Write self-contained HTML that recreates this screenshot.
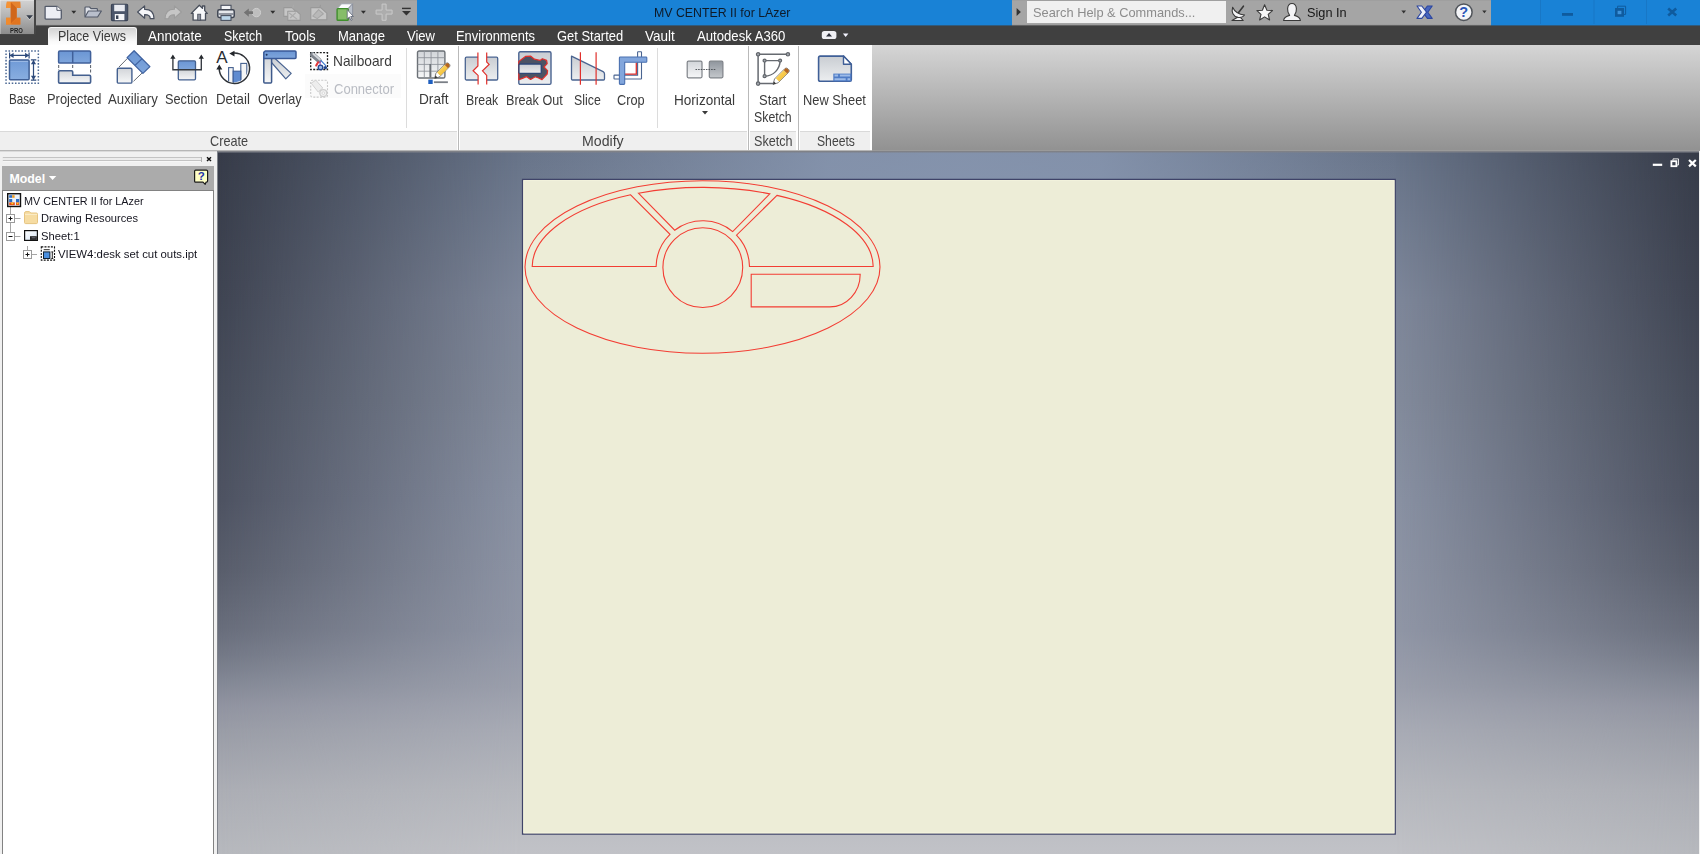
<!DOCTYPE html>
<html lang="en">
<head>
<meta charset="utf-8">
<title>MV CENTER II for LAzer</title>
<style>
*{box-sizing:border-box;margin:0;padding:0}
html,body{width:1700px;height:854px;overflow:hidden;background:#f0f0f0}
body{font-family:"Liberation Sans",sans-serif;font-size:13px;color:#3c3c3c;position:relative}
.t{position:absolute;white-space:nowrap;display:block;transform-origin:0 0}
.a{position:absolute;display:block}
svg{position:absolute;display:block;overflow:visible}
#titlebar{position:absolute;left:0;top:0;width:1700px;height:26px;background:#1982d6}
#qat{position:absolute;left:0;top:0;width:417px;height:26px;background:linear-gradient(#9c9c9c 0,#a5a5a5 1.5px,#a5a5a5 24px,#9a9a9a 25px)}
#infocenter{position:absolute;left:1012px;top:0;width:479px;height:26px;background:linear-gradient(#9c9c9c 0,#a5a5a5 1.5px,#a5a5a5 24px,#9a9a9a 25px)}
#tbedge{position:absolute;left:0;top:25px;width:1700px;height:1px;background:rgba(64,64,64,.6)}
#search{position:absolute;left:1027px;top:1px;width:199px;height:22px;background:#f0f0f0}
#tabbar{position:absolute;left:0;top:26px;width:1700px;height:19px;background:#404040}
#tabactive{position:absolute;left:48px;top:27px;width:89px;height:19px;background:linear-gradient(#d2d2d2,#e6e6e6 40%,#fafafa 75%,#fff);border:1px solid #f4f4f4;border-bottom:none;border-radius:3px 3px 0 0}
#appbtn{position:absolute;left:0;top:0;width:36px;height:35px;background:#454545;border-bottom-right-radius:2px}
#appbtn i{position:absolute;left:0;top:0;width:34px;height:34px;display:block;background:linear-gradient(#e6e6e6 0,#d0d0d0 1.5px,#b2b2b2 50%,#8b8b8b);box-shadow:inset 1px 0 0 rgba(255,255,255,.28)}
#ribbon{position:absolute;left:0;top:45px;width:1700px;height:106px;background:linear-gradient(#d5d5d5,#919191)}
#panels{position:absolute;left:0;top:45px;width:872px;height:106px;background:#fff}
.ptl{position:absolute;top:131px;height:19px;background:#efefef;border-top:1px solid #d9d9d9}
.vsep{position:absolute;width:1px;background:#dcdcdc}
.psep{position:absolute;width:1px;top:46px;height:104px;background:#b9b9b9}
#ribshadow{position:absolute;left:0;top:150px;width:872px;height:1px;background:#b6b6b6}
#ribshadow2{position:absolute;left:218px;top:151px;width:1481px;height:2px;background:linear-gradient(#7f8187 50%,rgba(126,129,138,.5) 50%)}
#ribshadow4{position:absolute;left:872px;top:150px;width:828px;height:1px;background:#9a9a9a}
#ribshadow3{position:absolute;left:0;top:151px;width:217px;height:1px;background:#dadada}
#browser{position:absolute;left:0;top:151px;width:218px;height:703px;background:#f0f0f0;border-right:1px solid #7f838b}
#bhead{position:absolute;left:2px;top:166px;width:212px;height:25px;background:#ababab}
#btree{position:absolute;left:2px;top:190px;width:212px;height:670px;background:#fff;border:1px solid #828282}
#canvas{position:absolute;left:218px;top:152px;width:1481px;height:702px;overflow:hidden;background:#8793ab}
#sheet{position:absolute;left:522px;top:179px;width:874px;height:656px;background:#ececd6;border:1px solid #2b305c}
#canvas{background:linear-gradient(to bottom,#687489 0.00%,#6a768b 1.85%,#7e879a 21.08%,#838b9c 35.33%,#8991a3 49.57%,#9096a6 68.09%,#9b9fac 76.21%,#a8abb5 82.34%,#b6b8be 90.88%,#c1c2c7 100.00%)}
#cvL,#cvR{position:absolute;top:0;width:304px;height:702px;background:linear-gradient(to bottom,#363b48 0.00%,#3f4452 21.08%,#464c5a 35.33%,#4d5261 49.57%,#585d6b 59.54%,#686d7b 68.09%,#737886 71.65%,#818693 75.21%,#9093a0 78.77%,#999ca6 82.34%,#abadb4 90.88%,#b6b8bd 100.00%)}
#cvL{left:0;-webkit-mask-image:linear-gradient(to right,#000,transparent);mask-image:linear-gradient(to right,#000,transparent)}
#cvR{right:0;-webkit-mask-image:linear-gradient(to left,#000,transparent);mask-image:linear-gradient(to left,#000,transparent)}
#cvT{position:absolute;left:304px;top:0;width:874px;height:28px;background:linear-gradient(to right,rgba(138,153,179,0),rgba(138,153,179,.78) 35%,rgba(138,153,179,.82) 50%,rgba(138,153,179,.78) 66%,rgba(138,153,179,0))}

</style>
</head>
<body>
<div id="titlebar"></div><div id="qat"></div><div id="infocenter"></div><div id="search"></div>
<span class="t" style="left:653.70px;top:4.0px;font-size:13px;color:#0e1a28;line-height:17px;transform:scaleX(0.949);">MV CENTER II for LAzer</span>
<span class="t" style="left:1033.00px;top:4.0px;font-size:13.4px;color:#8c8c8c;line-height:17px;transform:scaleX(0.957);">Search Help &amp; Commands...</span>
<span class="t" style="left:1307.20px;top:4.0px;font-size:13.4px;color:#161616;line-height:17px;transform:scaleX(0.950);">Sign In</span>
<div id="tbedge"></div><div id="tabbar"></div><div id="tabactive"></div>
<span class="t" style="left:57.90px;top:27.0px;font-size:14.2px;color:#3a3a3a;line-height:18px;transform:scaleX(0.882);">Place Views</span>
<span class="t" style="left:148.20px;top:27.0px;font-size:14.2px;color:#ffffff;line-height:18px;transform:scaleX(0.945);">Annotate</span>
<span class="t" style="left:224.20px;top:27.0px;font-size:14.2px;color:#ffffff;line-height:18px;transform:scaleX(0.879);">Sketch</span>
<span class="t" style="left:284.70px;top:27.0px;font-size:14.2px;color:#ffffff;line-height:18px;transform:scaleX(0.925);">Tools</span>
<span class="t" style="left:337.60px;top:27.0px;font-size:14.2px;color:#ffffff;line-height:18px;transform:scaleX(0.919);">Manage</span>
<span class="t" style="left:406.60px;top:27.0px;font-size:14.2px;color:#ffffff;line-height:18px;transform:scaleX(0.919);">View</span>
<span class="t" style="left:456.00px;top:27.0px;font-size:14.2px;color:#ffffff;line-height:18px;transform:scaleX(0.911);">Environments</span>
<span class="t" style="left:557.00px;top:27.0px;font-size:14.2px;color:#ffffff;line-height:18px;transform:scaleX(0.912);">Get Started</span>
<span class="t" style="left:645.20px;top:27.0px;font-size:14.2px;color:#ffffff;line-height:18px;transform:scaleX(0.950);">Vault</span>
<span class="t" style="left:697.00px;top:27.0px;font-size:14.2px;color:#ffffff;line-height:18px;transform:scaleX(0.926);">Autodesk A360</span>
<div id="appbtn"><i></i></div>
<svg style="left:0;top:0" width="1700" height="46" viewBox="0 0 1700 46"><g>
<path d="M6.9 1.8H20.2L20.5 8H16.7V17.8H20.3V24.5H6V17.8H10.7V8H6Z" fill="#ec7c22"/>
<path d="M10.7 2.2L16.7 8V17.8L10.7 23.5Z" fill="#c9601a" opacity=".8"/>
<path d="M6.9 1.8H10.7V8H6Z" fill="#f59335"/>
<path d="M16.7 8L11 1.8H20.2L20.5 8Z" fill="#e48435" opacity=".8"/>
<path d="M6 17.8H10.7V24.5H6Z" fill="#f28a2a"/>
<path d="M16.7 17.8H20.3V24.5H11Z" fill="#e07420" opacity=".9"/>
<path d="M26.3 16.2H32.9L29.6 20.2Z" fill="#e6e6e6" opacity=".7"/>
<path d="M26.3 15.2H32.9L29.6 19.2Z" fill="#353d4a"/>
</g>
<g transform="translate(44.5,5.5)"><path d="M1.4 0.8H12.4L16.8 4.8V12.6Q16.8 13.6 15.8 13.6H1.4Q0.6 13.6 0.6 12.6V1.6Q0.6 0.8 1.4 0.8Z" fill="#eceef4" stroke="#545b6a" stroke-width="1.3" stroke-linejoin="round"/><path d="M12.4 0.8V4.8H16.8" fill="#fff" stroke="#545b6a" stroke-width="1"/></g>
<path d="M71.3 10.7h5.0l-2.5 3.0z" fill="#2f2f2f"/>
<g transform="translate(84,6)"><path d="M1 10.6V1.8Q1 1 1.8 1H5.6L7 2.6H12.6Q13.4 2.6 13.4 3.4V5" fill="#dfe2e9" stroke="#545b6a" stroke-width="1.2" stroke-linejoin="round"/><path d="M1 11L4.4 5H17.4L13.6 11Z" fill="#b9bfcc" stroke="#545b6a" stroke-width="1.2" stroke-linejoin="round"/></g>
<g transform="translate(110.8,3.6)"><path d="M1.6 0.7H15.8Q16.9 0.7 16.9 1.8V15.9Q16.9 17 15.8 17H1.6Q0.6 17 0.6 15.9V1.8Q0.6 0.7 1.6 0.7Z" fill="#4b566b" stroke="#3a4356" stroke-width="1.1"/><rect x="3.4" y="1.2" width="10.6" height="6.4" fill="#e9ebf1"/><rect x="4" y="10.4" width="9.6" height="6.2" fill="#f4f5f8"/><rect x="5.2" y="11.8" width="2.4" height="3.6" fill="#3a4356"/></g>
<path d="M137.6 12L144.6 5.9V9.3Q153.7 9 154 18.7H150.3Q150.2 14.6 144.6 14.7V18.2Z" fill="#f6f7fa" stroke="#4a5160" stroke-width="1.2" stroke-linejoin="round"/>
<path d="M181.4 12L174.4 5.9V9.3Q165.3 9 165 18.7H168.7Q168.8 14.6 174.4 14.7V18.2Z" fill="#c6c6c6" stroke="#9c9c9c" stroke-width="1.1" stroke-linejoin="round"/>
<g transform="translate(190.5,4.2)"><path d="M0.8 9.2L8.8 1L12 4.2V1.8H14.2V6.4L16.8 9.2H15V16H2.6V9.2Z" fill="#f7f8fa" stroke="#484e5a" stroke-width="1.3" stroke-linejoin="round"/><rect x="7.2" y="10" width="3" height="6" fill="#8a909c" stroke="#484e5a" stroke-width="0.8"/></g>
<g transform="translate(217,4.6)"><rect x="4" y="0.7" width="10" height="5" fill="#f4f5f8" stroke="#4a5160" stroke-width="1.1"/><rect x="0.8" y="5.2" width="16.4" height="7.6" rx="1.4" fill="#e6e8ec" stroke="#3f4552" stroke-width="1.5"/><path d="M1.6 9.4H16.4" stroke="#6d7380" stroke-width="1.4"/><rect x="4" y="11" width="10" height="4.8" fill="#bcd6ea" stroke="#4a5160" stroke-width="1.1"/></g>
<g transform="translate(243.4,7.6)"><circle cx="13" cy="5" r="4.2" fill="#bebebe" stroke="#cfcfcf" stroke-width="1"/><path d="M0.4 5L5.4 0.8V3.6H9.6V6.4H5.4V9.2Z" fill="#737373"/></g>
<path d="M270.3 10.7h5.0l-2.5 3.0z" fill="#2f2f2f"/>
<g transform="translate(283.2,4)" fill="#c6c6c6" stroke="#999" stroke-width="1.1" stroke-linejoin="round"><path d="M0.6 3.6H8.6L11.6 6.4V12.4H0.6Z"/><path d="M4.6 7.2H13.4L17 10.4V16.4H4.6Z"/><path d="M10.6 0.6L9.4 4.6M6 9L14 15.4M7 14L12.6 8.6" fill="none" stroke="#aaa"/></g>
<g transform="translate(310.2,4)" fill="#c6c6c6" stroke="#999" stroke-width="1.1" stroke-linejoin="round"><path d="M0.6 3.6H10.4L16.6 9.2V15.8H0.6Z"/><path d="M2.6 12L8.4 5.6L13.2 9.8L7 14.6Z" fill="#b8b8b8" stroke="#a6a6a6"/><path d="M10.4 0.8L9.6 3.6" fill="none"/></g>
<g transform="translate(336.2,3)"><path d="M1 5.6L5.4 0.8H16.4L12 5.6Z" fill="#fafbfc" stroke="#9aa0aa" stroke-width="0.9" stroke-linejoin="round"/><path d="M12 5.6L16.4 0.8V12.6L12 17.2Z" fill="#b9bfc9" stroke="#8a909c" stroke-width="0.9" stroke-linejoin="round"/><rect x="0.9" y="5.6" width="11.1" height="11.6" rx="0.8" fill="#86bd69" stroke="#3f8f2c" stroke-width="1.4"/><path d="M11 6.6V16L13.2 14L14.8 17.4L16 16.8L14.5 13.5H17.2Z" fill="#fff" stroke="#5a6170" stroke-width="0.8" stroke-linejoin="round"/></g>
<path d="M360.9 10.7h5.0l-2.5 3.0z" fill="#2f2f2f"/>
<g transform="translate(375.5,3.5)"><path d="M6.6 0.6H10.6V6.6H16.6V10.6H10.6V16.8H6.6V10.6H0.6V6.6H6.6Z" fill="#adadad" stroke="#cacaca" stroke-width="1" stroke-linejoin="round"/></g>
<path d="M402 8.4H410.8" stroke="#333" stroke-width="1.4"/><path d="M402 11H410.8L406.4 15.4Z" fill="#333"/>
<path d="M1016.6 8L1020.9 12L1016.6 16Z" fill="#333"/>
<g fill="#f5f5f7" stroke="#383838" stroke-width="1.1" stroke-linejoin="round"><path d="M1238 17L1232 20.5H1243.2L1240.4 17.4Z"/><path d="M1232.6 7.3C1231.3 12 1233 16.4 1238 17.4C1241 17.9 1243.4 16.7 1244.5 15C1239.6 14.6 1234.6 11.6 1232.6 7.3Z"/><path d="M1238.6 12.4L1243.4 6.2" stroke-width="1.6" stroke-linecap="round"/></g>
<g transform="translate(1256.5,4)"><path d="M8.1 0.8L10.4 6.2L16 6.6L11.7 10.3L13.1 16L8.1 12.9L3.1 16L4.5 10.3L0.4 6.6L5.9 6.2Z" fill="#f8f8f8" stroke="#3c3c3c" stroke-width="1.1" stroke-linejoin="round"/></g>
<path d="M1283.6 20.5Q1284 16.8 1289.6 15.4Q1287.4 12.6 1287.6 8.6Q1288 3.5 1292 3.5Q1296 3.5 1296.4 8.6Q1296.6 12.6 1294.4 15.4Q1300 16.8 1300.4 20.5Z" fill="#f4f4f6" stroke="#383838" stroke-width="1.1" stroke-linejoin="round"/>
<path d="M1401.4 10.6h4.6l-2.3 2.8z" fill="#333"/>
<g stroke="#2d47a0" stroke-width="1.1" stroke-linejoin="round"><path d="M1432.2 6H1427.4L1422.8 12.2L1427.4 18.4H1432.2L1427.8 12.2Z" fill="#4766bf"/><path d="M1417 6H1421.8L1426.6 12.2L1421.8 18.4H1417L1421.4 12.2Z" fill="#eef1fa"/></g>
<g transform="translate(1454.8,3)"><circle cx="9" cy="9.2" r="8.3" fill="#f4f5f8" stroke="#50545a" stroke-width="1.5"/><text x="9" y="14.4" text-anchor="middle" font-family="Liberation Sans, sans-serif" font-weight="bold" font-size="14.5" fill="#2a55b8">?</text></g>
<path d="M1482.2 10.6h4.4l-2.2 2.6z" fill="#333"/>
<path d="M1540.5 0V24M1594 0V24M1646.5 0V24" stroke="#1877c6" stroke-width="1"/>
<rect x="1562" y="13" width="11" height="2.8" fill="#0f5b9e"/>
<path d="M1617.6 8V6.2H1625.6V14.4H1624" fill="none" stroke="#0f5b9e" stroke-width="1"/><rect x="1615" y="8" width="9" height="8.8" fill="#0f5b9e"/><rect x="1617.6" y="10.8" width="3.8" height="3.4" fill="#3d93dc"/>
<path d="M1668.2 8.6L1676.2 15.6M1676.2 8.6L1668.2 15.6" stroke="#0f5b9e" stroke-width="2.6"/>
<rect x="821.8" y="31.1" width="14.6" height="8" rx="2.6" fill="#f0f0f4"/><path d="M826 36.6L829 33.1L832 36.6Z" fill="#2c2f3a"/><path d="M842.9 33.4H848.4L845.65 36.9Z" fill="#f4f4ff"/></svg>
<span class="t" style="left:10.20px;top:24.7px;font-size:7.4px;color:#232323;line-height:11px;transform:scaleX(0.803);font-weight:bold;">PRO</span>
<div id="ribbon"></div><div id="panels"></div><div class="ptl" style="left:0;width:457px"></div><div class="ptl" style="left:460px;width:287px"></div><div class="ptl" style="left:750px;width:46px"></div><div class="ptl" style="left:800px;width:70px"></div>
<span class="t" style="left:8.70px;top:90.0px;font-size:14.4px;color:#3b3b3b;line-height:18px;transform:scaleX(0.810);">Base</span>
<span class="t" style="left:46.80px;top:90.0px;font-size:14.4px;color:#3b3b3b;line-height:18px;transform:scaleX(0.895);">Projected</span>
<span class="t" style="left:108.20px;top:90.0px;font-size:14.4px;color:#3b3b3b;line-height:18px;transform:scaleX(0.917);">Auxiliary</span>
<span class="t" style="left:165.00px;top:90.0px;font-size:14.4px;color:#3b3b3b;line-height:18px;transform:scaleX(0.886);">Section</span>
<span class="t" style="left:215.90px;top:90.0px;font-size:14.4px;color:#3b3b3b;line-height:18px;transform:scaleX(0.920);">Detail</span>
<span class="t" style="left:257.80px;top:90.0px;font-size:14.4px;color:#3b3b3b;line-height:18px;transform:scaleX(0.880);">Overlay</span>
<span class="t" style="left:333.00px;top:52.0px;font-size:14.4px;color:#3b3b3b;line-height:18px;transform:scaleX(0.954);">Nailboard</span>
<span class="t" style="left:419.00px;top:90.0px;font-size:14.4px;color:#3b3b3b;line-height:18px;transform:scaleX(0.950);">Draft</span>
<span class="t" style="left:465.60px;top:91.0px;font-size:14.4px;color:#3b3b3b;line-height:18px;transform:scaleX(0.856);">Break</span>
<span class="t" style="left:506.20px;top:91.0px;font-size:14.4px;color:#3b3b3b;line-height:18px;transform:scaleX(0.875);">Break Out</span>
<span class="t" style="left:574.10px;top:91.0px;font-size:14.4px;color:#3b3b3b;line-height:18px;transform:scaleX(0.858);">Slice</span>
<span class="t" style="left:616.60px;top:91.0px;font-size:14.4px;color:#3b3b3b;line-height:18px;transform:scaleX(0.886);">Crop</span>
<span class="t" style="left:674.20px;top:91.0px;font-size:14.4px;color:#3b3b3b;line-height:18px;transform:scaleX(0.943);">Horizontal</span>
<span class="t" style="left:758.90px;top:91.0px;font-size:14.4px;color:#3b3b3b;line-height:18px;transform:scaleX(0.902);">Start</span>
<span class="t" style="left:753.70px;top:108.3px;font-size:14.4px;color:#3b3b3b;line-height:18px;transform:scaleX(0.856);">Sketch</span>
<span class="t" style="left:803.20px;top:91.0px;font-size:14.4px;color:#3b3b3b;line-height:18px;transform:scaleX(0.893);">New Sheet</span>
<div class="a" style="left:305px;top:74px;width:96px;height:24px;background:#fbfbfb"></div>
<span class="t" style="left:333.60px;top:80.0px;font-size:14.4px;color:#b9bcc3;line-height:18px;transform:scaleX(0.904);">Connector</span>
<span class="t" style="left:209.90px;top:132.4px;font-size:14.4px;color:#444444;line-height:18px;transform:scaleX(0.882);">Create</span>
<span class="t" style="left:582.40px;top:132.4px;font-size:14.4px;color:#444444;line-height:18px;transform:scaleX(0.982);">Modify</span>
<span class="t" style="left:753.80px;top:132.4px;font-size:14.4px;color:#444444;line-height:18px;transform:scaleX(0.876);">Sketch</span>
<span class="t" style="left:816.50px;top:132.4px;font-size:14.4px;color:#444444;line-height:18px;transform:scaleX(0.846);">Sheets</span>
<div class="vsep" style="left:406px;top:48px;height:80px"></div><div class="vsep" style="left:657px;top:48px;height:80px"></div>
<div class="psep" style="left:458px"></div><div class="psep" style="left:748px"></div><div class="psep" style="left:798px"></div>
<svg style="left:702px;top:110.5px" width="6" height="4" viewBox="0 0 6 4"><path d="M0 0H6L3 3.5Z" fill="#3a3a3a"/></svg>
<svg style="left:0;top:0" width="0" height="0"><defs>
<linearGradient id="gB" x1="0" y1="0" x2="0" y2="1"><stop offset="0" stop-color="#6f9ad6"/><stop offset="1" stop-color="#89aee0"/></linearGradient>
<linearGradient id="gB2" x1="0" y1="0" x2="0" y2="1"><stop offset="0" stop-color="#6b96d4"/><stop offset="1" stop-color="#7fa6dc"/></linearGradient>
<linearGradient id="gG" x1="0" y1="0" x2="0" y2="1"><stop offset="0" stop-color="#d2d5d9"/><stop offset="1" stop-color="#f6f7f8"/></linearGradient>
<linearGradient id="gG2" x1="0" y1="0" x2="0" y2="1"><stop offset="0" stop-color="#c9cdd2"/><stop offset="1" stop-color="#eceef0"/></linearGradient>
<linearGradient id="gD" x1="0" y1="0" x2="0" y2="1"><stop offset="0" stop-color="#8f959d"/><stop offset="1" stop-color="#c4c8cc"/></linearGradient>
<linearGradient id="gY" x1="0" y1="0" x2="1" y2="1"><stop offset="0" stop-color="#ffe27a"/><stop offset="1" stop-color="#f0b21c"/></linearGradient>
</defs></svg>
<svg style="left:0;top:0" width="900" height="152" viewBox="0 0 900 152"><g transform="translate(5,50)">
<rect x="1.05" y="0.95" width="32.3" height="32.3" fill="#fff" stroke="#4b6894" stroke-width="1.5" stroke-dasharray="1.55 1.68" stroke-dashoffset="0.78"/>
<rect x="4.5" y="10" width="19.6" height="19.8" rx="1" fill="url(#gB)" stroke="#3f5f95" stroke-width="1.5"/>
<path d="M5.6 11.4H23" stroke="#a9c4ea" stroke-width="0.8"/>
<path d="M5 5.4H24M4.6 2.6V8.4M24.1 2.6V8.4M28.5 10V30M25.9 9.9H31.3M25.9 30.1H31.3" stroke="#2e4b7c" stroke-width="1.2" fill="none"/>
<path d="M4.6 5.4l4-2.6v5.2zM24.1 5.4l-4-2.6v5.2zM28.5 10l-2.6 4.2h5.2zM28.5 30l-2.6-4.2h5.2z" fill="#2e4b7c"/>
</g>
<g transform="translate(58,50.5)">
<rect x="0.6" y="0.6" width="32" height="12" rx="1.2" fill="url(#gB2)" stroke="#40609a" stroke-width="1.5"/>
<path d="M14.7 0.6V12.6" stroke="#40609a" stroke-width="1.5"/>
<path d="M0.7 14.5V19.5M14.7 14.5V18.5M32.6 14.5V23.5" stroke="#555c66" stroke-width="1" stroke-dasharray="3 1.5"/>
<path d="M1.8 20.3H13.5Q14.7 20.3 14.7 21.5V24.8H31.4Q32.6 24.8 32.6 26V31.4Q32.6 32.6 31.4 32.6H1.8Q0.6 32.6 0.6 31.4V21.5Q0.6 20.3 1.8 20.3Z" fill="url(#gG)" stroke="#44608f" stroke-width="1.6"/>
</g>
<g transform="translate(116.5,50)">
<path d="M2.5 17L11 8.3M17 31.3L25.6 23" stroke="#555b63" stroke-width="0.9"/>
<rect x="0.8" y="18.3" width="14.6" height="14.8" rx="1.2" fill="url(#gG)" stroke="#44608f" stroke-width="1.4"/>
<path d="M17.6 0.8L33.4 16.6L26.4 23.4L10.6 7.6Z" fill="url(#gB2)" stroke="#3f62a0" stroke-width="1.3" stroke-linejoin="round"/>
<path d="M25.6 8.6L18.5 15.4" stroke="#3f62a0" stroke-width="1.3"/>
</g>
<g transform="translate(165,50)">
<rect x="13.3" y="10.8" width="17.2" height="9" fill="url(#gB2)"/>
<rect x="13.3" y="19.8" width="17.2" height="10" fill="url(#gG)"/>
<rect x="13.3" y="10.8" width="17.2" height="19" rx="1.2" fill="none" stroke="#44608f" stroke-width="1.3"/>
<path d="M7.9 7V19.7H36.3V7" fill="none" stroke="#353a41" stroke-width="1.35"/>
<path d="M7.9 4.5L5.3 8.8H10.5ZM36.3 4.5L33.7 8.8H38.9Z" fill="#25282d"/>
</g>
<g transform="translate(215,50)">
<clipPath id="cpD"><circle cx="18.6" cy="17.8" r="14.6"/></clipPath>
<g clip-path="url(#cpD)">
<rect x="13.6" y="17.6" width="4.6" height="16" fill="#f4f5f6" stroke="#44608f" stroke-width="1.1"/>
<rect x="25.8" y="13.4" width="6" height="20" fill="#f4f5f6" stroke="#44608f" stroke-width="1.1"/>
<rect x="18.2" y="21.2" width="7.6" height="14" fill="#5f8bd0" stroke="#3d5f9c" stroke-width="1.1"/>
</g>
<path d="M17.5 3.2A15.2 15.2 0 1 1 4.2 18" fill="none" stroke="#2f3338" stroke-width="1.5"/>
<path d="M14.3 3.6L19.5 0.8V6.6ZM4.3 14.6L1.3 19.6H7.3Z" fill="#23262b"/>
<text x="1.2" y="13.4" font-family="Liberation Sans, sans-serif" font-size="17" fill="#2a2d32">A</text>
</g>
<g transform="translate(263,50)">
<path d="M5.5 9L11 7.5L28.2 23.4L22.8 28.8Z" fill="url(#gG2)" stroke="#4a6491" stroke-width="1.2" stroke-linejoin="round"/>
<rect x="0.8" y="7.5" width="7.8" height="25.6" rx="1" fill="url(#gG)" stroke="#3e5a8b" stroke-width="1.5"/>
<path d="M2.2 1H32Q33 1 33 2V7.6Q33 8.6 32 8.6H0.8V2.4Z" fill="url(#gB2)" stroke="#3a5a98" stroke-width="1.5" stroke-linejoin="round"/>
<circle cx="3.6" cy="4.7" r="1" fill="#1f3560"/>
</g>
<g transform="translate(310,52)">
<rect x="0.7" y="0.7" width="16.8" height="16.8" fill="#fff" stroke="#1e1e1e" stroke-width="1.3" stroke-dasharray="2 1.35" stroke-dashoffset="1"/>
<path d="M2.6 2.7L9 8.4" stroke="#7e848c" stroke-width="5.2" stroke-linecap="round"/>
<path d="M3.4 1.9L9.8 7.6" stroke="#d3d6da" stroke-width="2" stroke-linecap="round"/>
<path d="M8.1 10.3L6.2 13.5" stroke="#e5393b" stroke-width="2.1" stroke-linecap="round"/>
<path d="M10.1 9.2V13.8" stroke="#9a45b8" stroke-width="1.1"/>
<path d="M10.8 8.4L16 13.8" stroke="#3a78d0" stroke-width="1.2"/>
<circle cx="10.5" cy="15.4" r="2.3" fill="#9dbbe8" stroke="#23468f" stroke-width="1.3"/>
<circle cx="15.4" cy="15.6" r="1.7" fill="#23468f"/>
</g>
<g transform="translate(310,79.6)">
<rect x="0.7" y="0.7" width="16.8" height="16.8" rx="1.5" fill="#fafafa" stroke="#c9c9c9" stroke-width="1.1" stroke-dasharray="2 1.35" stroke-dashoffset="1"/>
<path d="M1.2 3.6L5.8 0.6L12.8 8.4L8.2 12.4Z" fill="#ededed" stroke="#d2d2d2" stroke-width="1" stroke-linejoin="round"/>
<circle cx="13.3" cy="13.5" r="3.5" fill="#f1f1f1" stroke="#cecece" stroke-width="1.2"/>
<circle cx="13.3" cy="13.5" r="1.3" fill="#fff" stroke="#d0d0d0" stroke-width="0.8"/>
</g>
<g transform="translate(416.5,50)">
<rect x="1" y="1" width="27.4" height="27" rx="1.6" fill="url(#gG)" stroke="#6b7076" stroke-width="1.4"/>
<path d="M7.8 1V28M14.6 1V28M21.4 1V28M1 7.7H28.4M1 14.4H28.4M1 21.2H28.4" stroke="#8c9198" stroke-width="1" fill="none" opacity=".85"/>
<path d="M13.7 14V27.6" stroke="#6b7076" stroke-width="1.6"/>
<rect x="11.8" y="29.6" width="4.4" height="4.4" fill="#1f5fbf"/>
<path d="M17.4 32.2H31.4" stroke="#7a7f86" stroke-width="1.8"/>
<path d="M18.2 28.4L19.4 23.4L29.6 13.2Q31 12.4 32.4 13.6L33.2 14.6Q33.8 15.8 33 16.8L22.8 27Z" fill="#fff" stroke="#5a5a5a" stroke-width="0.8" stroke-linejoin="round"/>
<path d="M20.6 22.6L28.2 15L31.4 18.2L23.8 25.8Z" fill="url(#gY)"/>
<path d="M28.2 15L29.8 13.4Q31 12.6 32.2 13.8L33 14.8Q33.5 15.8 32.8 16.6L31.4 18.2Z" fill="#b5651d"/>
<path d="M18.2 28.4L18.9 25.6L21 27.6Z" fill="#333"/>
</g>
<g transform="translate(464.5,52)">
<rect x="0.8" y="5.2" width="32.4" height="22.8" rx="1.2" fill="url(#gG2)" stroke="#4a6491" stroke-width="1.3"/>
<path d="M13.4 0L13.4 14L8.6 18.8L13.6 23.4V33L22.2 33V23.4L18 18.8L24.6 12.4L22.2 10V0Z" fill="#fff"/>
<path d="M13.4 0.5V14L8.6 18.8L13.6 23.4V32.6M22.2 0.5V10L24.6 12.4L18 18.8L22.2 23.4V32.6" fill="none" stroke="#e0302c" stroke-width="1.2"/>
</g>
<g transform="translate(518,51)">
<rect x="0.8" y="0.8" width="32.2" height="32.6" rx="1.4" fill="url(#gG2)" stroke="#4a6491" stroke-width="1.4"/>
<path d="M0.8 10.5L7.5 5.4L12.8 5.2L16.4 8.2L22 9.4L24.4 7.8L28.6 9.4L29.2 12.6L26 16L29.6 19.6L29.2 23L24 28.6L20.6 27L17.2 25.8L12.6 28.4L8.4 25.6L4.4 27.4L0.8 28.8Z" fill="#4b5364" stroke="#e0302c" stroke-width="1.2" stroke-linejoin="round"/>
<rect x="0.9" y="13" width="22.4" height="9.4" rx="1" fill="url(#gG2)" stroke="#2f4775" stroke-width="1.4"/>
</g>
<g transform="translate(570.5,52)">
<path d="M1 4.2L32.6 19.6Q34 20.4 34 22V27Q34 28 33 28H2Q1 28 1 27Z" fill="url(#gG2)" stroke="#4a6491" stroke-width="1.3" stroke-linejoin="round"/>
<path d="M9.9 0.3V32.8M25.6 0.3V32.8" stroke="#e0302c" stroke-width="1.2"/>
</g>
<g transform="translate(613,51)">
<path d="M24.6 1.2Q24.6 0.7 25.1 0.7H28Q28.5 0.7 28.5 1.2V27.5Q28.5 28 28 28H1.5Q1 28 1 27.5V24.6Q1 24.1 1.5 24.1H24.6Z" fill="#fff" stroke="#4a6491" stroke-width="1.1"/>
<path d="M23.3 11.6V23.2H12" fill="none" stroke="#e0302c" stroke-width="1.3"/>
<path d="M7.2 6H33Q33.8 6 33.8 6.8V10.5Q33.8 11.3 33 11.3H11.7V32.6Q11.7 33.4 10.9 33.4H7.2Q6.4 33.4 6.4 32.6V6.8Q6.4 6 7.2 6Z" fill="#82a6dc" stroke="#4a70b0" stroke-width="1.1"/>
</g>
<g transform="translate(686.5,60.5)">
<rect x="0.7" y="0.7" width="14.8" height="16.6" rx="1.2" fill="url(#gG)" stroke="#7e8288" stroke-width="1.2"/>
<rect x="22.8" y="0.7" width="13.6" height="16.6" rx="1.2" fill="url(#gD)" stroke="#7e8288" stroke-width="1.2"/>
<path d="M9 9H29" stroke="#44484e" stroke-width="0.9" stroke-dasharray="1.6 1"/>
</g>
<g transform="translate(755.5,52)">
<path d="M32.4 2.3H2.6V31.6H18" fill="none" stroke="#666a70" stroke-width="1.5"/>
<path d="M9.1 8.6H24.6A15.5 15.6 0 0 1 9.1 24.2Z" fill="#fff" stroke="#666a70" stroke-width="1.4"/>
<g fill="#a4a8ae" stroke="#62666c" stroke-width="1.2"><circle cx="2.6" cy="2.3" r="1.7"/><circle cx="32.4" cy="2.3" r="1.7"/><circle cx="2.6" cy="31.6" r="1.7"/><circle cx="9.1" cy="8.6" r="1.5"/><circle cx="24.6" cy="8.6" r="1.5"/><circle cx="9.1" cy="24.2" r="1.5"/></g>
<path d="M17.6 32.4L19 27L29.6 16.4Q31 15.6 32.4 16.8L33.4 17.8Q34.2 19 33.2 20.2L22.6 30.8Z" fill="#fff" stroke="#5a5a5a" stroke-width="0.8" stroke-linejoin="round"/>
<path d="M20.2 26.2L28.2 18.2L31.6 21.6L23.6 29.6Z" fill="url(#gY)"/>
<path d="M28.2 18.2L29.8 16.6Q31 15.8 32.2 17L33.2 18Q33.8 19 33 20L31.6 21.6Z" fill="#b5651d"/>
<path d="M17.6 32.4L18.4 29.4L20.6 31.6Z" fill="#333"/>
</g>
<g transform="translate(817.5,55)">
<path d="M2.6 1.1H26L33.8 9.2V24.8Q33.8 26.3 32.3 26.3H2.6Q1.1 26.3 1.1 24.8V2.6Q1.1 1.1 2.6 1.1Z" fill="url(#gG2)" stroke="#3f5f97" stroke-width="1.6" stroke-linejoin="round"/>
<path d="M26 1.1V9.2H33.8Z" fill="#fff" stroke="#3f5f97" stroke-width="1.4" stroke-linejoin="round"/>
<rect x="15.8" y="18.6" width="18" height="7.7" fill="#4f7cc6"/>
<path d="M17 20.5H20.6M22.4 20.5H32.6M17 24.3H28.2M30 24.3H32.6" stroke="#9dbbe8" stroke-width="1.9"/>
</g></svg>
<div id="ribshadow"></div><div id="ribshadow4"></div>
<div id="browser"></div><div id="ribshadow3"></div><div id="bhead"></div><div id="btree"></div>
<svg style="left:0;top:0" width="218" height="300" viewBox="0 0 218 300"><path d="M2.8 157.7H201.5M2.8 160.4H201.5" stroke="#c3c3c3" stroke-width="1.5"/><path d="M2.8 158.9H201.5M2.8 161.6H201.5" stroke="#fbfbfb" stroke-width="0.9"/><path d="M201.5 157V162" stroke="#b0b0b0" stroke-width="1"/>
<path d="M207 157.2L211 161M211 157.2L207 161" stroke="#111" stroke-width="1.5"/>
<path d="M48.9 176H56.3L52.6 180.1Z" fill="#fff"/>
<g transform="translate(194,169.4)"><path d="M1.6 0.7H12.4Q13.6 0.7 13.6 1.9V11.6Q13.6 12.8 12.4 12.8H12L11.2 15L9 12.8H1.6Q0.6 12.8 0.6 11.6V1.9Q0.6 0.7 1.6 0.7Z" fill="#ffffc6" stroke="#1a1a1a" stroke-width="1.2" stroke-linejoin="round"/><text x="7.2" y="11" text-anchor="middle" font-family="Liberation Sans, sans-serif" font-weight="bold" font-size="11.5" fill="#2233aa">?</text></g>
<path d="M10.5 207V214M10.5 222V232M14 218.5H20.5M14 236.5H20.5M27.5 246V250M31 254.5H37" stroke="#a6a6a6" stroke-width="1" fill="none"/>
<rect x="6.5" y="214.5" width="8" height="8" fill="#fff" stroke="#9b9b9b" stroke-width="1"/><path d="M8.5 218.5H12.5" stroke="#111" stroke-width="1"/><path d="M10.5 216.5V220.5" stroke="#111" stroke-width="1"/>
<rect x="6.5" y="232.5" width="8" height="8" fill="#fff" stroke="#9b9b9b" stroke-width="1"/><path d="M8.5 236.5H12.5" stroke="#111" stroke-width="1"/>
<rect x="23.5" y="250.5" width="8" height="8" fill="#fff" stroke="#9b9b9b" stroke-width="1"/><path d="M25.5 254.5H29.5" stroke="#111" stroke-width="1"/><path d="M27.5 252.5V256.5" stroke="#111" stroke-width="1"/>
<g transform="translate(7,193)"><rect x="0.7" y="0.7" width="12.8" height="12.8" fill="#e8f0fa" stroke="#111" stroke-width="1.4"/>
<rect x="2.2" y="2.2" width="3" height="2.6" fill="#2b6cc4"/><rect x="5.2" y="2.2" width="2.4" height="2.6" fill="#f29a1c"/>
<rect x="2.2" y="6" width="3" height="3.2" fill="#2b6cc4"/><rect x="9" y="6" width="3.2" height="3.4" fill="#2b6cc4"/>
<rect x="2.2" y="9.4" width="5.6" height="2.8" fill="#e8501c"/><rect x="4.4" y="9.6" width="1.8" height="1.6" fill="#ffd21c"/>
<rect x="9" y="9.4" width="3.2" height="2.8" fill="#e8501c"/><rect x="9.8" y="9.8" width="1.6" height="1.4" fill="#ffd21c"/></g>
<g transform="translate(24,211)"><path d="M0.5 2.2Q0.5 0.6 2 0.6H5.4L6.8 2H12.4Q13.5 2 13.5 3.2V11.6Q13.5 12.6 12.4 12.6H1.6Q0.5 12.6 0.5 11.6Z" fill="#f6dca2" stroke="#e3bf78" stroke-width="0.9"/><path d="M1 3.4H13" stroke="#fbeccb" stroke-width="1"/></g>
<g transform="translate(24,230)"><linearGradient id="gSh" x1="0" y1="0" x2="1" y2="1"><stop offset="0" stop-color="#fff"/><stop offset="1" stop-color="#d6e4f4"/></linearGradient><rect x="0.6" y="0.6" width="12.8" height="9.8" fill="url(#gSh)" stroke="#111" stroke-width="1.2"/><rect x="6" y="6.2" width="6.8" height="3.7" fill="#222"/><path d="M7.6 7.8H11.6" stroke="#889" stroke-width="0.8"/></g>
<g transform="translate(40.7,246.3)"><rect x="0.6" y="0.6" width="13.2" height="13.2" fill="#fff" stroke="#111" stroke-width="1.1" stroke-dasharray="2 1.2"/><rect x="2.8" y="5.6" width="6.4" height="6.6" fill="#4a90e0" stroke="#123" stroke-width="1"/><path d="M3 3.4H9M11.6 5.6V12.2M10.6 5.6H12.6M10.6 12.2H12.6" stroke="#111" stroke-width="0.9"/></g></svg>
<span class="t" style="left:9.40px;top:170.9px;font-size:12.4px;color:#ffffff;line-height:16px;font-weight:bold;">Model</span>
<span class="t" style="left:24.40px;top:193.5px;font-size:11px;color:#15151f;line-height:14px;transform:scaleX(0.983);">MV CENTER II for LAzer</span>
<span class="t" style="left:41.00px;top:211.2px;font-size:11px;color:#15151f;line-height:14px;transform:scaleX(1.011);">Drawing Resources</span>
<span class="t" style="left:41.00px;top:228.8px;font-size:11px;color:#15151f;line-height:14px;transform:scaleX(1.020);">Sheet:1</span>
<span class="t" style="left:57.60px;top:246.6px;font-size:11px;color:#15151f;line-height:14px;transform:scaleX(1.035);">VIEW4:desk set cut outs.ipt</span>
<div id="canvas"><div id="cvL"></div><div id="cvR"></div><div id="cvT"></div></div><div id="ribshadow2"></div>
<svg id="drawing" style="left:0;top:0" width="1700" height="854" viewBox="0 0 1700 854" fill="none" stroke="#f33d33" stroke-width="1.1">
<rect x="522.6" y="179.45" width="872.6" height="654.6" fill="#ededd7" stroke="#3f4368" stroke-width="1.4"/>
<rect x="523.8" y="180.6" width="870.2" height="652.3" fill="none" stroke="#f5f5de" stroke-width="1"/>
<ellipse cx="702.5" cy="267" rx="177.5" ry="86.3"/>
<circle cx="702.8" cy="267.6" r="39.9"/>
<path d="M532.2 266.5 A170.5 79.6 0 0 1 630.6 194.8 L670 234.3 A46.7 46.7 0 0 0 656.1 266.5 Z"/>
<path d="M638.4 193.2 A170.5 79.6 0 0 1 769.8 193.9 L732.7 231.6 A46.7 46.7 0 0 0 674.7 230.2 Z"/>
<path d="M777 195.4 A170.5 79.6 0 0 1 873.2 266.5 L749.5 266.5 A46.7 46.7 0 0 0 736.5 235.2 Z"/>
<path d="M751.2 274.2 L860.2 274.2 A30.4 32.7 0 0 1 829.8 306.9 L751.2 306.9 Z"/>
</svg>
<svg style="left:1640px;top:152px" width="60" height="20" viewBox="1640 152 60 20"><rect x="1652.8" y="163.7" width="9.4" height="2.2" fill="#fff"/><path d="M1673 160.4V158.9H1678.5V165H1677" fill="none" stroke="#e8e8e8" stroke-width="1"/><rect x="1671.4" y="161.2" width="5" height="5" fill="none" stroke="#fff" stroke-width="1.8"/><path d="M1689 160L1695.8 166.4M1695.8 160L1689 166.4" stroke="#fff" stroke-width="2.2"/></svg>
</body>
</html>
